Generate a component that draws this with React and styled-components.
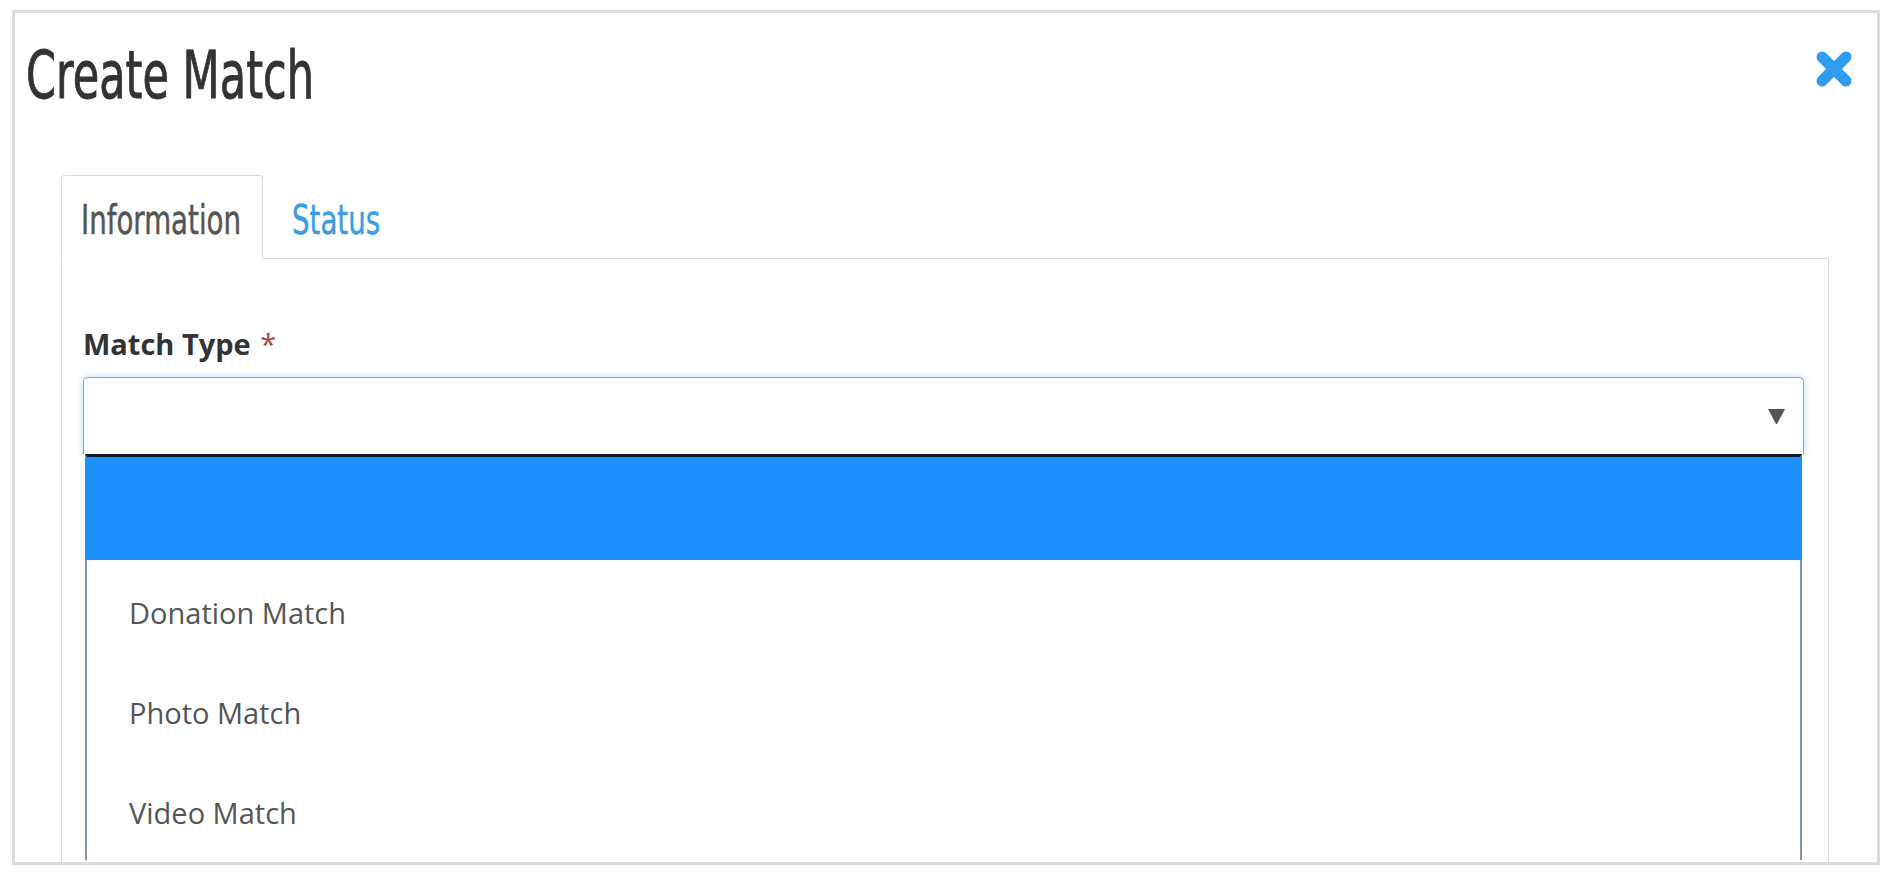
import React, { useState } from "react";
import styled, { createGlobalStyle } from "styled-components";

//-----데이터
const TABS = [
  { key: "info", label: "Information", width: 202 },
  { key: "status", label: "Status", width: 110 },
];
const OPTIONS = ["", "Donation Match", "Photo Match", "Video Match"];

//-----메인
function App() {
  const [tab, setTab] = useState("info");
  const [selected] = useState(0);

  return (
    <>
      <GlobalStyle />
      <Page>
        <Modal>
          <Header>
            <Title>
              <Condensed $squeeze={0.725} $stroke={0.9}>
                Create Match
              </Condensed>
            </Title>
            <CloseButton aria-label="close">
              <svg width="38" height="38" viewBox="0 0 38 38">
                <path
                  d="M7 7 L31 31 M31 7 L7 31"
                  stroke="#2f9cf0"
                  strokeWidth="11"
                  strokeLinecap="round"
                  fill="none"
                />
              </svg>
            </CloseButton>
          </Header>

          <Body>
            <TabList>
              {TABS.map((t) => (
                <Tab
                  key={t.key}
                  $active={tab === t.key}
                  $width={t.width}
                  onClick={() => setTab(t.key)}
                >
                  <Condensed $squeeze={0.75} $stroke={0.5}>
                    {t.label}
                  </Condensed>
                </Tab>
              ))}
            </TabList>

            <Panel>
              <Label>
                Match Type <Required>*</Required>
              </Label>
              <SelectWrap>
                <SelectBox>
                  <svg width="17" height="15" viewBox="0 0 17 15">
                    <polygon points="0,0 17,0 9,15 8,15" fill="#555" />
                  </svg>
                </SelectBox>
                <Dropdown>
                  {OPTIONS.map((opt, i) => (
                    <Option key={i} $selected={i === selected}>
                      {opt}
                    </Option>
                  ))}
                </Dropdown>
              </SelectWrap>
            </Panel>
          </Body>
        </Modal>
      </Page>
    </>
  );
}

export default App;

//-----스타일
const GlobalStyle = createGlobalStyle`
  html, body {
    margin: 0;
    padding: 0;
    background: #fff;
  }
  body {
    font-family: "Open Sans", "Liberation Sans", sans-serif;
  }
`;

const Page = styled.div`
  width: 1882px;
  height: 881px;
  box-sizing: border-box;
  padding: 10px 2px 0 12px;
  overflow: hidden;
`;

const Modal = styled.div`
  display: flex;
  flex-direction: column;
  height: 855px;
  box-sizing: border-box;
  border: 3px solid #dcdcdc;
  background: #fff;
  overflow: hidden;
`;

const Header = styled.div`
  display: flex;
  justify-content: space-between;
  align-items: flex-start;
  padding: 26px 24px 0 11px;
`;

const Condensed = styled.span`
  display: inline-block;
  font-family: "DejaVu Sans Condensed", "DejaVu Sans", sans-serif;
  font-stretch: condensed;
  white-space: nowrap;
  -webkit-text-stroke: ${(p) => p.$stroke}px currentColor;
  transform: scaleX(${(p) => p.$squeeze});
  transform-origin: left center;
`;

const Title = styled.h1`
  margin: 0;
  height: 66px;
  font-size: 66px;
  line-height: 66px;
  font-weight: normal;
  color: #333;
`;

const CloseButton = styled.button`
  display: flex;
  margin-top: 11px;
  padding: 0;
  border: 0;
  background: none;
  cursor: pointer;
`;

const Body = styled.div`
  display: flex;
  flex-direction: column;
  flex: 1;
  padding: 70px 48px 0 46px;
`;

const TabList = styled.div`
  display: flex;
  gap: 9px;
`;

const Tab = styled.div`
  position: relative;
  z-index: 1;
  width: ${(p) => p.$width}px;
  height: 84px;
  box-sizing: border-box;
  margin-bottom: -1px;
  padding: 22px 18px 0 19px;
  border: 1px solid ${(p) => (p.$active ? "#dcdcdc" : "transparent")};
  border-bottom-color: ${(p) => (p.$active ? "#fff" : "transparent")};
  border-radius: 4px 4px 0 0;
  background: ${(p) => (p.$active ? "#fff" : "transparent")};
  color: ${(p) => (p.$active ? "#555" : "#3c9ee0")};
  font-size: 41px;
  line-height: 41px;
  cursor: pointer;
  overflow: visible;
`;

const Panel = styled.div`
  flex: 1;
  padding: 65px 24px 0 21px;
  border: 1px solid #dcdcdc;
  border-bottom: none;
`;

const Label = styled.label`
  display: block;
  margin-bottom: 13px;
  font-size: 29px;
  line-height: 40px;
  font-weight: 700;
  color: #333;
`;

const Required = styled.span`
  margin-left: 2px;
  color: #a94442;
  font-weight: 400;
`;

const SelectWrap = styled.div`
  position: relative;
`;

const SelectBox = styled.div`
  display: flex;
  justify-content: flex-end;
  align-items: center;
  height: 77px;
  box-sizing: border-box;
  padding-right: 18px;
  border: 1px solid #7fa6c8;
  border-bottom: none;
  border-radius: 5px 5px 0 0;
  background: #fff;
  box-shadow: 0 0 7px rgba(102, 175, 233, 0.45);
`;

const Dropdown = styled.div`
  position: absolute;
  top: 100%;
  left: 2px;
  right: 2px;
  z-index: 2;
  border-top: 3px solid #0b1628;
  border-left: 2px solid #8796a6;
  border-right: 2px solid #8796a6;
  background: #fff;
`;

const Option = styled.div`
  height: ${(p) => (p.$selected ? 103 : 100)}px;
  box-sizing: border-box;
  margin: 0 ${(p) => (p.$selected ? "-2px" : "0")};
  padding: 33px 0 0 42px;
  background: ${(p) => (p.$selected ? "#1e90ff" : "#fff")};
  color: ${(p) => (p.$selected ? "#fff" : "#555")};
  font-size: 29px;
  line-height: 40px;
`;
